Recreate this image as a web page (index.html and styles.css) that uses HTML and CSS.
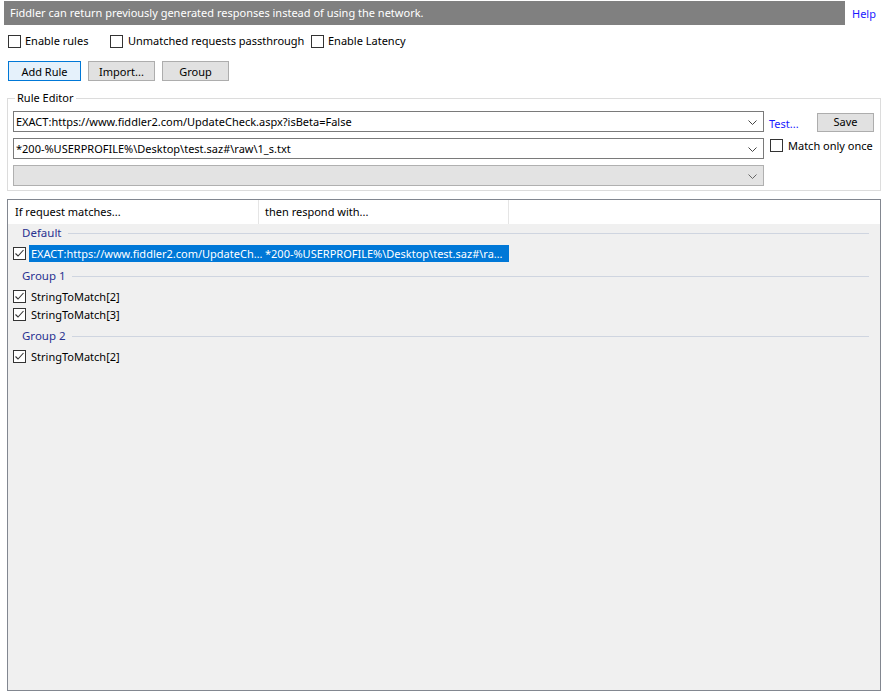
FILE: index.html
```html
<!DOCTYPE html>
<html>
<head>
<meta charset="utf-8">
<link rel="stylesheet" href="styles.css">
</head>
<body>
<div class="app">
  <div class="topbar">
    <div class="banner">Fiddler can return previously generated responses instead of using the network.</div>
    <a class="link help">Help</a>
  </div>

  <div class="opts">
    <label class="chk opt1"><span class="box"></span>Enable rules</label>
    <label class="chk opt2"><span class="box"></span>Unmatched requests passthrough</label>
    <label class="chk opt3"><span class="box"></span>Enable Latency</label>
  </div>

  <div class="btns">
    <button class="btn primary w73">Add Rule</button>
    <button class="btn w66">Import...</button>
    <button class="btn w66">Group</button>
  </div>

  <fieldset class="editor">
    <legend>Rule Editor</legend>
    <div class="editor-body">
      <div class="combos">
        <div class="combo"><span class="val">EXACT:https://www.fiddler2.com/UpdateCheck.aspx?isBeta=False</span><svg class="chev" width="9" height="5" viewBox="0 0 9 5"><polyline points="0.5,0.5 4.5,4.5 8.5,0.5" fill="none" stroke="#444" stroke-width="1"/></svg></div>
        <div class="combo"><span class="val">*200-%USERPROFILE%\Desktop\test.saz#\raw\1_s.txt</span><svg class="chev" width="9" height="5" viewBox="0 0 9 5"><polyline points="0.5,0.5 4.5,4.5 8.5,0.5" fill="none" stroke="#444" stroke-width="1"/></svg></div>
        <div class="combo disabled"><span class="val"></span><svg class="chev" width="9" height="5" viewBox="0 0 9 5"><polyline points="0.5,0.5 4.5,4.5 8.5,0.5" fill="none" stroke="#666" stroke-width="1"/></svg></div>
      </div>
      <div class="side">
        <div class="side-row1">
          <a class="link test">Test...</a>
          <button class="btn save">Save</button>
        </div>
        <label class="chk once"><span class="box"></span>Match only once</label>
      </div>
    </div>
  </fieldset>

  <div class="list">
    <div class="list-head">
      <div class="col c1">If request matches...</div>
      <div class="col c2">then respond with...</div>
      <div class="col c3"></div>
    </div>
    <div class="list-body">
      <div class="group g-first"><span class="gname">Default</span><span class="gline"></span></div>
      <div class="row">
        <span class="box checked"><svg width="11" height="11" viewBox="0 0 11 11"><polyline points="1.5,5.5 4,8 9.5,2" fill="none" stroke="#333" stroke-width="1.1"/></svg></span>
        <span class="sel">
          <span class="cell a">EXACT:https://www.fiddler2.com/UpdateCh…</span>
          <span class="cell b">*200-%USERPROFILE%\Desktop\test.saz#\ra…</span>
        </span>
      </div>

      <div class="group"><span class="gname">Group 1</span><span class="gline"></span></div>
      <div class="row">
        <span class="box checked"><svg width="11" height="11" viewBox="0 0 11 11"><polyline points="1.5,5.5 4,8 9.5,2" fill="none" stroke="#333" stroke-width="1.1"/></svg></span>
        <span class="plain">StringToMatch[2]</span>
      </div>
      <div class="row">
        <span class="box checked"><svg width="11" height="11" viewBox="0 0 11 11"><polyline points="1.5,5.5 4,8 9.5,2" fill="none" stroke="#333" stroke-width="1.1"/></svg></span>
        <span class="plain">StringToMatch[3]</span>
      </div>

      <div class="group g-last"><span class="gname">Group 2</span><span class="gline"></span></div>
      <div class="row">
        <span class="box checked"><svg width="11" height="11" viewBox="0 0 11 11"><polyline points="1.5,5.5 4,8 9.5,2" fill="none" stroke="#333" stroke-width="1.1"/></svg></span>
        <span class="plain">StringToMatch[2]</span>
      </div>
    </div>
  </div>
</div>
</body>
</html>
```

FILE: styles.css
```css
* { box-sizing: border-box; }

html, body {
  margin: 0;
  padding: 0;
  background: #ffffff;
}

body {
  font-family: "Noto Sans", "Open Sans", "DejaVu Sans", sans-serif;
  font-size: 11px;
  color: #000000;
  width: 888px;
  height: 697px;
  overflow: hidden;
}

.app {
  display: flex;
  flex-direction: column;
  height: 697px;
}

/* top banner */
.topbar {
  display: flex;
  align-items: center;
  margin-top: 1px;
  height: 24px;
}

.banner {
  margin-left: 4px;
  width: 841px;
  height: 24px;
  background: #808080;
  color: #ffffff;
  line-height: 24px;
  padding-left: 6px;
  white-space: nowrap;
}

.link {
  color: #1a1aff;
  cursor: pointer;
}

.help {
  margin-left: 7px;
}

/* checkboxes */
.chk {
  display: flex;
  align-items: center;
  white-space: nowrap;
  height: 13px;
}

.box {
  display: inline-flex;
  align-items: center;
  justify-content: center;
  width: 13px;
  height: 13px;
  border: 1px solid #333333;
  background: #ffffff;
  flex: none;
}

.opts {
  display: flex;
  margin-top: 9px;
  padding-left: 8px;
  height: 13px;
}

.opts .chk { line-height: 12px; }
.opts .box { margin-right: 4px; margin-top: 1px; }
.opt1 { width: 102px; flex: none; }
.opt2 { width: 201px; flex: none; }
.opts .opt2 .box { margin-right: 5px; }

/* buttons */
.btns {
  display: flex;
  gap: 7px;
  margin-top: 14px;
  padding-left: 8px;
}

.btn {
  font-family: inherit;
  font-size: 11px;
  height: 20px;
  padding: 0;
  background: #e1e1e1;
  border: 1px solid #adadad;
  color: #000;
  line-height: 17px;
}

.btn.primary {
  background: #e5f1fb;
  border-color: #0078d7;
}

.w73 { width: 73px; }
.w66 { width: 67px; }

/* rule editor */
.editor {
  margin: 10px 7px 0 7px;
  padding: 0 6px 4px 5px;
  border: 1px solid #dcdcdc;
  min-width: 0;
}

.editor legend {
  padding: 0 3px 0 2px;
  margin-left: 2px;
  line-height: 14px;
  height: 14px;
}

.editor-body {
  display: flex;
  padding-top: 6px;
}

.combos {
  display: flex;
  flex-direction: column;
  gap: 6px;
  width: 751px;
  flex: none;
}

.combo {
  height: 21px;
  border: 1px solid #7a7a7a;
  background: #ffffff;
  display: flex;
  align-items: center;
  padding: 0 6px 0 2px;
}

.combo .val {
  flex: 1;
  white-space: nowrap;
  overflow: hidden;
}

.combo.disabled {
  background: #e3e3e3;
  border-color: #b0b0b0;
}

.chev { flex: none; margin-top: 1px; }

.side {
  display: flex;
  flex-direction: column;
  padding-left: 5px;
  flex: 1;
  min-width: 0;
}

.side-row1 {
  display: flex;
  align-items: center;
  justify-content: space-between;
  height: 21px;
}

.test { margin-top: 3px; }

.save {
  width: 57px;
  height: 19px;
  margin-top: 1px;
  line-height: 16px;
}

.once {
  margin-top: 7px;
  margin-left: 1px;
}

.once .box { margin-right: 5px; }

/* list */
.list {
  margin: 8px 7px 6px 7px;
  flex: 1;
  border: 1px solid #828790;
  background: #f0f0f0;
  display: flex;
  flex-direction: column;
}

.list-head {
  display: flex;
  height: 24px;
  background: #ffffff;
}

.col {
  line-height: 24px;
  white-space: nowrap;
}

.c1 {
  width: 251px;
  padding-left: 7px;
  border-right: 1px solid #e5e5e5;
}

.c2 {
  width: 250px;
  padding-left: 6px;
  border-right: 1px solid #e5e5e5;
}

.c3 { flex: 1; }

.list-body {
  display: flex;
  flex-direction: column;
  padding-left: 5px;
  padding-right: 11px;
}

.group {
  display: flex;
  align-items: center;
  height: 18px;
  margin-top: 5px;
  margin-bottom: 2px;
  padding-left: 9px;
  padding-bottom: 2px;
}

.g-first { margin-top: 0; }
.g-last { margin-top: 4px; }

.gname {
  color: #2a3290;
  font-size: 11.5px;
  white-space: nowrap;
}

.gline {
  flex: 1;
  height: 1px;
  background: #cfd5e0;
  margin-left: 6px;
  margin-top: 2px;
}

.row {
  display: flex;
  align-items: center;
  height: 18px;
}

.row .box {
  width: 13px;
  height: 13px;
}

.sel {
  display: flex;
  margin-left: 3px;
  height: 17px;
  width: 480px;
  background: #0078d7;
  color: #ffffff;
  align-items: center;
}

.cell {
  white-space: nowrap;
  overflow: hidden;
  text-overflow: ellipsis;
}

.cell.a {
  width: 236px;
  padding-left: 2px;
}

.cell.b {
  width: 244px;
}

.plain {
  margin-left: 3px;
  padding-left: 2px;
  white-space: nowrap;
}
```
